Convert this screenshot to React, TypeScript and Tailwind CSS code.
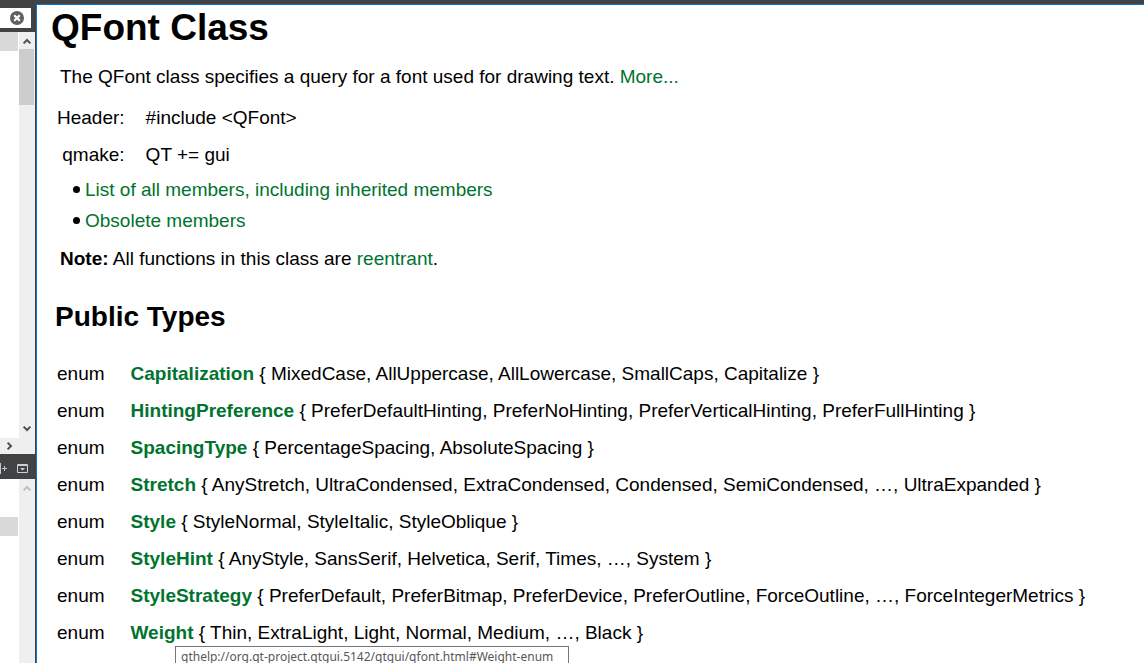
import React from 'react';

const types = [
  { name: 'Capitalization', values: 'MixedCase, AllUppercase, AllLowercase, SmallCaps, Capitalize' },
  { name: 'HintingPreference', values: 'PreferDefaultHinting, PreferNoHinting, PreferVerticalHinting, PreferFullHinting' },
  { name: 'SpacingType', values: 'PercentageSpacing, AbsoluteSpacing' },
  { name: 'Stretch', values: 'AnyStretch, UltraCondensed, ExtraCondensed, Condensed, SemiCondensed, …, UltraExpanded' },
  { name: 'Style', values: 'StyleNormal, StyleItalic, StyleOblique' },
  { name: 'StyleHint', values: 'AnyStyle, SansSerif, Helvetica, Serif, Times, …, System' },
  { name: 'StyleStrategy', values: 'PreferDefault, PreferBitmap, PreferDevice, PreferOutline, ForceOutline, …, ForceIntegerMetrics' },
  { name: 'Weight', values: 'Thin, ExtraLight, Light, Normal, Medium, …, Black' },
];

const arrows = {
  up: 'M0.6 6.4L4 3l3.4 3.4',
  down: 'M0.6 1.6L4 5l3.4-3.4',
  right: 'M1.6 0.6L5 4 1.6 7.4',
};

const Arrow = ({ direction, color = '#505050' }: { direction: keyof typeof arrows; color?: string }) => (
  <svg width="8" height="8" viewBox="0 0 8 8" fill="none" stroke={color} strokeWidth="2" overflow="visible">
    <path d={arrows[direction]} />
  </svg>
);

const Sidebar = () => {
  return (
    <aside className="flex flex-col w-9 shrink-0 border-r border-[#404244] bg-[#efefef]">
      <div className="bg-[#404244] pt-2 pb-1 pr-1">
        <div className="flex h-5 items-center justify-end bg-white pr-[7px]">
          <button aria-label="Clear filter" className="block">
            <svg width="14" height="14" viewBox="0 0 14 14">
              <circle cx="7" cy="7" r="7" fill="#5f6062" />
              <path d="M4.2 4.2l5.6 5.6M9.8 4.2l-5.6 5.6" stroke="#fff" strokeWidth="2.2" />
            </svg>
          </button>
        </div>
      </div>
      <div className="flex flex-1">
        <div className="flex-1 bg-white">
          <div className="h-[19px] bg-[#d9d9d9] mr-px" />
        </div>
        <div className="flex w-4 flex-col items-center justify-between">
          <div className="w-full">
            <button aria-label="Scroll up" className="flex h-[17px] w-[15px] items-center justify-center">
              <Arrow direction="up" />
            </button>
            <div className="h-14 w-[15px] bg-[#cdcdcd]" />
          </div>
          <button aria-label="Scroll down" className="flex h-[18px] w-full items-center justify-center">
            <Arrow direction="down" />
          </button>
        </div>
      </div>
      <div className="flex h-4 items-center pl-[6px]">
        <button aria-label="Scroll right">
          <Arrow direction="right" />
        </button>
      </div>
      <div className="flex h-[25px] items-center justify-between bg-[#404244] pr-[7px] pt-1">
        <button aria-label="Split">
          <svg width="8" height="11" viewBox="0 0 8 11" fill="none" stroke="#c8c8c8">
            <path d="M0.5 0v11M2 5.5h5M4.5 3v5" />
          </svg>
        </button>
        <button aria-label="Close pane">
          <svg width="11" height="9" viewBox="0 0 11 9">
            <path d="M0.5 0.5h10v8h-10zM0 1.5h11" fill="none" stroke="#d0d0d0" />
            <path d="M3 4h5L5.5 6.5z" fill="#d0d0d0" />
          </svg>
        </button>
      </div>
      <div className="flex h-[184px]">
        <div className="flex-1 bg-white pt-[38px]">
          <div className="h-[19px] bg-[#d9d9d9] mr-px" />
        </div>
        <div className="w-4">
          <button aria-label="Scroll up" className="flex h-[17px] w-[15px] items-center justify-center">
            <Arrow direction="up" color="#bfbfbf" />
          </button>
        </div>
      </div>
    </aside>
  );
};

const App = () => {
  return (
    <div className="relative flex min-h-screen bg-white text-black text-[19px] leading-[22px] font-['Liberation_Sans',Arial,sans-serif]">
      <Sidebar />
      <div className="flex-1 min-w-0 border-t-4 border-[#404244]">
        <main className="h-full border-l border-t border-[#0078d7] pl-[14px]">
          <h1 className="text-[37px] leading-[45px] font-bold">QFont Class</h1>
          <p className="mt-4 ml-[9px]">
            The QFont class specifies a query for a font used for drawing text.{' '}
            <a href="#details" className="text-[#00732f]">More...</a>
          </p>
          <table className="mt-[11px] ml-[6px]">
            <tbody>
              <tr className="h-[37px]">
                <td className="p-0 pr-[21px] text-right">Header:</td>
                <td className="p-0">#include &lt;QFont&gt;</td>
              </tr>
              <tr className="h-[37px]">
                <td className="p-0 pr-[21px] text-right">qmake:</td>
                <td className="p-0">QT += gui</td>
              </tr>
            </tbody>
          </table>
          <ul className="mt-px ml-[22px] leading-[31px]">
            <li className="flex items-center gap-[5px]">
              <span className="size-[7px] rounded-full bg-black" />
              <a href="#members" className="text-[#00732f]">List of all members, including inherited members</a>
            </li>
            <li className="flex items-center gap-[5px]">
              <span className="size-[7px] rounded-full bg-black" />
              <a href="#obsolete" className="text-[#00732f]">Obsolete members</a>
            </li>
          </ul>
          <p className="mt-3 ml-[9px]">
            <b>Note:</b> All functions in this class are <a href="#reentrant" className="text-[#00732f]">reentrant</a>.
          </p>
          <h2 className="mt-[31px] ml-1 text-[28px] leading-[32px] font-bold">Public Types</h2>
          <table className="mt-[22px] ml-[6px]">
            <tbody>
              {types.map((type) => (
                <tr key={type.name} className="h-[37px]">
                  <td className="p-0 pr-[26px]">enum</td>
                  <td className="p-0 whitespace-nowrap">
                    <a href={`#${type.name}-enum`} className="font-bold text-[#00732f]">{type.name}</a>
                    {` { ${type.values} }`}
                  </td>
                </tr>
              ))}
            </tbody>
          </table>
        </main>
      </div>
      <div
        role="tooltip"
        className="absolute bottom-0 left-[175px] h-[17px] w-[394px] overflow-hidden whitespace-nowrap border border-b-0 border-[#767676] bg-white px-[5px] text-[12px] leading-5 text-[#575757] font-['Noto_Sans',sans-serif]"
      >
        qthelp://org.qt-project.qtgui.5142/qtgui/qfont.html#Weight-enum
      </div>
    </div>
  );
};

export default App;
